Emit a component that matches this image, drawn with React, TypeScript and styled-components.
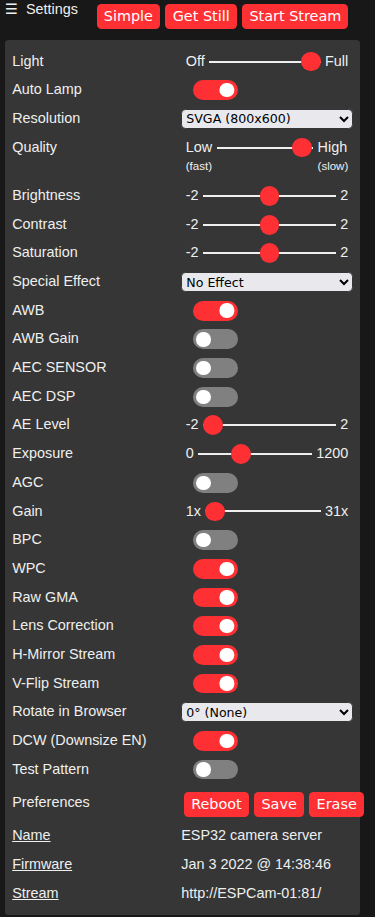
import React, { useState } from "react";
import styled, { createGlobalStyle, css } from "styled-components";

const GlobalStyle = createGlobalStyle`
  body {
    margin: 0;
    background: #181818;
    color: #efefef;
    font-family: "Liberation Sans", Arial, Helvetica, sans-serif;
    font-size: 14.4px;
  }
`;

const Page = styled.section`
  display: flex;
  flex-direction: column;
  padding-left: 5px;
`;

const Header = styled.div`
  display: flex;
  align-items: flex-start;
  height: 40px;
`;

const NavToggle = styled.label`
  line-height: 19.8px;
  white-space: pre;
  cursor: pointer;
  & span.burger {
    font-family: "DejaVu Sans", sans-serif;
  }
`;

const Button = styled.button`
  display: block;
  margin: 4px 2.7px 0;
  padding: 0 7.2px;
  border: 0;
  line-height: 25.2px;
  cursor: pointer;
  color: #fff;
  background: #ff3034;
  border-radius: 4.5px;
  font-family: "DejaVu Sans", sans-serif;
  font-size: 14.4px;
  outline: 0;
  flex-shrink: 0;
`;

const Menu = styled.nav`
  display: flex;
  flex-direction: column;
  width: 340.6px;
  padding: 7.2px;
  background: #363636;
  border-radius: 3.6px;
`;

const InputGroup = styled.div<{ $center?: boolean }>`
  display: flex;
  flex-wrap: nowrap;
  line-height: 19.8px;
  margin: 4.45px 0;
  ${(p) =>
    p.$center &&
    css`
      align-items: center;
    `}
`;

const Label = styled.label`
  display: inline-block;
  padding-right: 9px;
  min-width: 47%;
  flex-shrink: 0;
`;

const InfoLink = styled.a`
  color: #efefef;
  text-decoration: underline;
`;

const RangeEnd = styled.div`
  display: inline-block;
  padding: 0 4.5px;
  flex-shrink: 0;
`;

const RangeNote = styled.span`
  display: block;
  font-size: 80%;
  line-height: 19.8px;
`;

const Range = styled.input`
  -webkit-appearance: none;
  appearance: none;
  flex: 1 1 0;
  min-width: 0;
  height: 19.8px;
  background: #363636;
  cursor: pointer;
  margin: 0;

  &::-webkit-slider-runnable-track {
    width: 100%;
    height: 2px;
    background: #efefef;
    border: 0;
    border-radius: 0;
  }
  &::-webkit-slider-thumb {
    -webkit-appearance: none;
    height: 19.8px;
    width: 19.8px;
    border: 0;
    border-radius: 50%;
    background: #ff3034;
    margin-top: -8.9px;
  }
`;

const Select = styled.select`
  flex-grow: 1;
  min-width: 0;
  height: 19.8px;
  border: 1px solid #363636;
  border-radius: 4.5px;
  background-color: #e9e9ed;
  color: #000;
  font-family: "DejaVu Sans", sans-serif;
  font-size: 12.6px;
  outline: 0;
`;

const Switch = styled.label`
  display: block;
  position: relative;
  height: 19.8px;
  margin-left: 11.4px;
  & input {
    position: absolute;
    opacity: 0;
    width: 0;
    height: 0;
    margin: 0;
  }
`;

const Slider = styled.span<{ $on: boolean }>`
  display: inline-block;
  width: 44.9px;
  height: 19.8px;
  border-radius: 19.8px;
  cursor: pointer;
  background-color: ${(p) => (p.$on ? "#ff3034" : "grey")};
  transition: 0.4s;
  &:before {
    content: "";
    display: block;
    position: relative;
    left: 3.6px;
    top: 2.7px;
    width: 14.4px;
    height: 14.4px;
    border-radius: 50%;
    background-color: #fff;
    transition: 0.4s;
    transform: translateX(${(p) => (p.$on ? "23.4px" : "0")});
  }
`;

const Value = styled.span`
  white-space: nowrap;
`;

type Row =
  | { kind: "range"; label: string; min: number; max: number; value: number; lo: string; hi: string; loSub?: string; hiSub?: string }
  | { kind: "switch"; label: string; on: boolean }
  | { kind: "select"; label: string; options: string[] };

const rows: Row[] = [
  { kind: "range", label: "Light", min: 0, max: 100, value: 100, lo: "Off", hi: "Full" },
  { kind: "switch", label: "Auto Lamp", on: true },
  { kind: "select", label: "Resolution", options: ["SVGA (800x600)", "VGA (640x480)", "UXGA (1600x1200)"] },
  { kind: "range", label: "Quality", min: 4, max: 63, value: 62, lo: "Low", hi: "High", loSub: "(fast)", hiSub: "(slow)" },
  { kind: "range", label: "Brightness", min: -2, max: 2, value: 0, lo: "-2", hi: "2" },
  { kind: "range", label: "Contrast", min: -2, max: 2, value: 0, lo: "-2", hi: "2" },
  { kind: "range", label: "Saturation", min: -2, max: 2, value: 0, lo: "-2", hi: "2" },
  { kind: "select", label: "Special Effect", options: ["No Effect", "Negative", "Grayscale", "Sepia"] },
  { kind: "switch", label: "AWB", on: true },
  { kind: "switch", label: "AWB Gain", on: false },
  { kind: "switch", label: "AEC SENSOR", on: false },
  { kind: "switch", label: "AEC DSP", on: false },
  { kind: "range", label: "AE Level", min: -2, max: 2, value: -2, lo: "-2", hi: "2" },
  { kind: "range", label: "Exposure", min: 0, max: 1200, value: 420, lo: "0", hi: "1200" },
  { kind: "switch", label: "AGC", on: false },
  { kind: "range", label: "Gain", min: 0, max: 30, value: 0, lo: "1x", hi: "31x" },
  { kind: "switch", label: "BPC", on: false },
  { kind: "switch", label: "WPC", on: true },
  { kind: "switch", label: "Raw GMA", on: true },
  { kind: "switch", label: "Lens Correction", on: true },
  { kind: "switch", label: "H-Mirror Stream", on: true },
  { kind: "switch", label: "V-Flip Stream", on: true },
  { kind: "select", label: "Rotate in Browser", options: ["0° (None)", "90° (Right)", "-90° (Left)"] },
  { kind: "switch", label: "DCW (Downsize EN)", on: true },
  { kind: "switch", label: "Test Pattern", on: false },
];

function Toggle({ on }: { on: boolean }) {
  const [checked, setChecked] = useState(on);
  return (
    <Switch>
      <input type="checkbox" checked={checked} onChange={(e) => setChecked(e.target.checked)} />
      <Slider $on={checked} />
    </Switch>
  );
}

function Control({ row }: { row: Row }) {
  if (row.kind === "switch") return <Toggle on={row.on} />;
  if (row.kind === "select")
    return (
      <Select defaultValue={row.options[0]}>
        {row.options.map((o) => (
          <option key={o}>{o}</option>
        ))}
      </Select>
    );
  return (
    <>
      <RangeEnd>
        {row.lo}
        {row.loSub && <RangeNote>{row.loSub}</RangeNote>}
      </RangeEnd>
      <Range type="range" min={row.min} max={row.max} defaultValue={row.value} />
      <RangeEnd>
        {row.hi}
        {row.hiSub && <RangeNote>{row.hiSub}</RangeNote>}
      </RangeEnd>
    </>
  );
}

const info = [
  { label: "Name", value: "ESP32 camera server" },
  { label: "Firmware", value: "Jan 3 2022 @ 14:38:46" },
  { label: "Stream", value: "http://ESPCam-01:81/" },
];

export default function App() {
  return (
    <>
      <GlobalStyle />
      <Page>
        <Header>
          <NavToggle>
            <span className="burger">☰</span>
            {"\u00a0\u00a0Settings\u00a0\u00a0\u00a0\u00a0"}
          </NavToggle>
          <Button title="Swap to simple viewer">Simple</Button>
          <Button>Get Still</Button>
          <Button>Start Stream</Button>
        </Header>
        <Menu>
          {rows.map((row) => (
            <InputGroup key={row.label}>
              <Label>{row.label}</Label>
              <Control row={row} />
            </InputGroup>
          ))}
          <InputGroup $center>
            <Label>Preferences</Label>
            <Button>Reboot</Button>
            <Button>Save</Button>
            <Button>Erase</Button>
          </InputGroup>
          {info.map((i) => (
            <InputGroup key={i.label}>
              <Label>
                <InfoLink href="#">{i.label}</InfoLink>
              </Label>
              <Value>{i.value}</Value>
            </InputGroup>
          ))}
        </Menu>
      </Page>
    </>
  );
}
